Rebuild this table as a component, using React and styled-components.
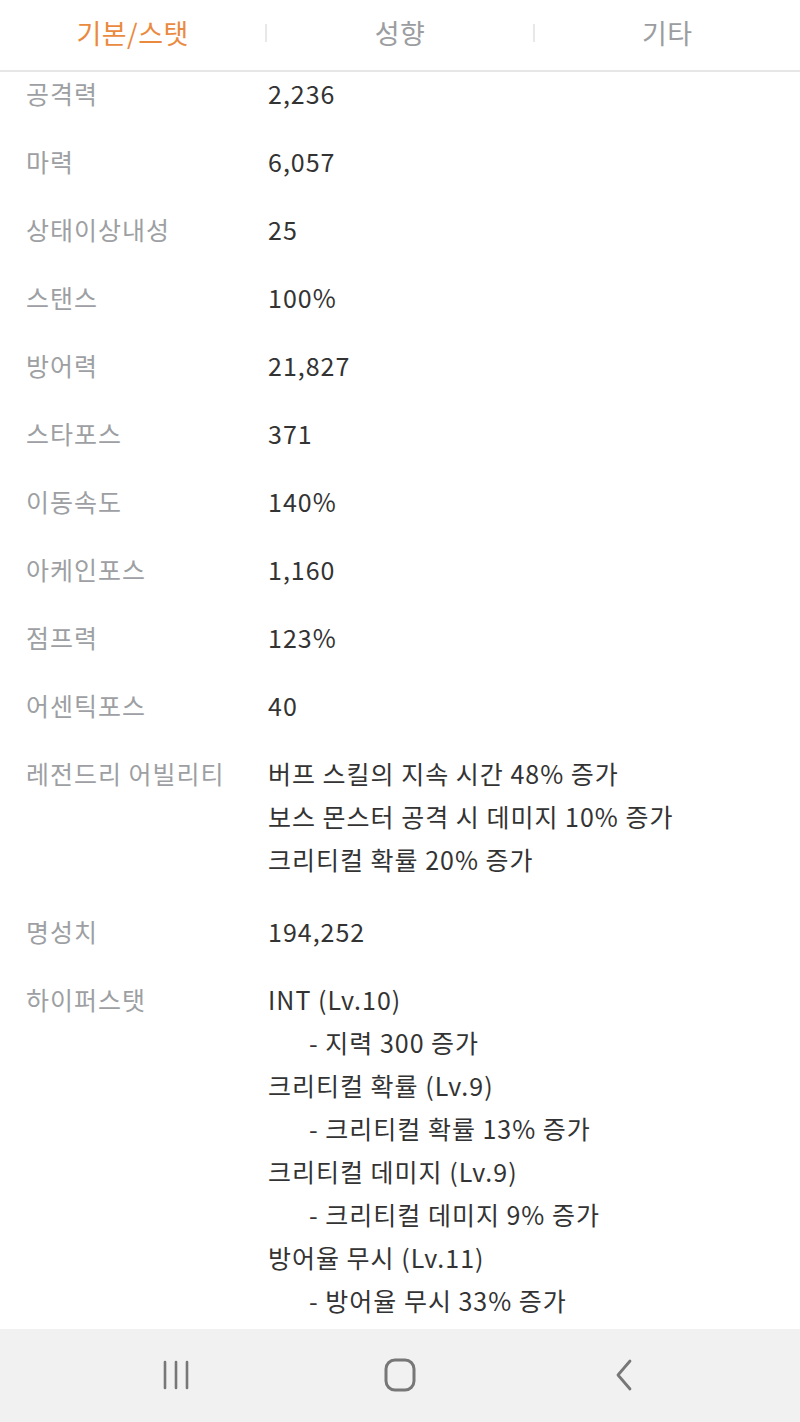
import styled, { createGlobalStyle } from "styled-components";

const GlobalStyle = createGlobalStyle`
    html, body {
        margin: 0;
        padding: 0;
        background: #ffffff;
    }
    body {
        font-family: "Noto Sans CJK KR", "Noto Sans", sans-serif;
    }
`;

const Screen = styled.div`
    width: 800px;
    height: 1422px;
    display: flex;
    flex-direction: column;
    overflow: hidden;
    background: #ffffff;
`;

const TabBar = styled.nav`
    display: flex;
    align-items: center;
    height: 72px;
    padding-bottom: 5px;
    box-sizing: border-box;
    flex-shrink: 0;
    border-bottom: 2px solid #e6e6e6;
    background: #ffffff;
`;

const Tab = styled.div`
    flex: 1;
    display: flex;
    align-items: center;
    justify-content: center;
    font-size: 27px;
    color: ${({ active }) => (active ? "#ea8a3f" : "#9b9da1")};
    letter-spacing: 0.5px;
`;

const TabDivider = styled.span`
    width: 2px;
    height: 18px;
    background: #e8e8e8;
`;

const StatList = styled.ul`
    list-style: none;
    margin: 0;
    padding: 0;
    flex: 1;
    overflow: hidden;
`;

const StatRow = styled.li`
    display: flex;
    align-items: flex-start;
    padding: 11.5px 0 ${({ extra }) => (extra ? 17.5 : 13.5)}px 26px;
    font-size: 25px;
    line-height: 43px;

    &:first-child {
        padding-top: 0;
    }
`;

const Label = styled.div`
    width: 242px;
    flex-shrink: 0;
    color: #9d9fa3;
    letter-spacing: 1px;
`;

const Value = styled.div`
    display: flex;
    flex-direction: column;
    color: #333333;
    letter-spacing: 1px;
`;

const ValueLine = styled.span`
    padding-left: ${({ indent }) => (indent ? 41 : 0)}px;
    white-space: pre;
`;

const NavBar = styled.div`
    height: 93px;
    flex-shrink: 0;
    background: #f1f1f1;
    display: flex;
    align-items: center;
    justify-content: center;
    gap: 164px;
`;

const NavButton = styled.div`
    width: 60px;
    height: 60px;
    display: flex;
    align-items: center;
    justify-content: center;
    margin-top: -2px;
`;

const stats = [
    ["공격력", ["2,236"]],
    ["마력", ["6,057"]],
    ["상태이상내성", ["25"]],
    ["스탠스", ["100%"]],
    ["방어력", ["21,827"]],
    ["스타포스", ["371"]],
    ["이동속도", ["140%"]],
    ["아케인포스", ["1,160"]],
    ["점프력", ["123%"]],
    ["어센틱포스", ["40"]],
    [
        "레전드리 어빌리티",
        [
            "버프 스킬의 지속 시간 48% 증가",
            "보스 몬스터 공격 시 데미지 10% 증가",
            "크리티컬 확률 20% 증가",
        ],
        true,
    ],
    ["명성치", ["194,252"]],
    [
        "하이퍼스탯",
        [
            "INT (Lv.10)",
            "- 지력 300 증가",
            "크리티컬 확률 (Lv.9)",
            "- 크리티컬 확률 13% 증가",
            "크리티컬 데미지 (Lv.9)",
            "- 크리티컬 데미지 9% 증가",
            "방어율 무시 (Lv.11)",
            "- 방어율 무시 33% 증가",
        ],
    ],
];

function App() {
    return (
        <Screen>
            <GlobalStyle />
            <TabBar>
                <Tab active>기본/스탯</Tab>
                <TabDivider />
                <Tab>성향</Tab>
                <TabDivider />
                <Tab>기타</Tab>
            </TabBar>
            <StatList>
                {stats.map(([label, lines, extra]) => (
                    <StatRow key={label} extra={extra}>
                        <Label>{label}</Label>
                        <Value>
                            {lines.map((line) => (
                                <ValueLine
                                    key={line}
                                    indent={line.startsWith("-")}
                                >
                                    {line}
                                </ValueLine>
                            ))}
                        </Value>
                    </StatRow>
                ))}
            </StatList>
            <NavBar>
                <NavButton>
                    <svg width="30" height="30" viewBox="0 0 30 30">
                        <g stroke="#777" strokeWidth="2.6" strokeLinecap="round">
                            <line x1="4" y1="2" x2="4" y2="28" />
                            <line x1="15" y1="2" x2="15" y2="28" />
                            <line x1="26" y1="2" x2="26" y2="28" />
                        </g>
                    </svg>
                </NavButton>
                <NavButton>
                    <svg width="32" height="34" viewBox="0 0 32 34">
                        <rect
                            x="2"
                            y="2"
                            width="28"
                            height="30"
                            rx="9"
                            fill="none"
                            stroke="#777"
                            strokeWidth="3"
                        />
                    </svg>
                </NavButton>
                <NavButton>
                    <svg width="20" height="32" viewBox="0 0 20 32">
                        <polyline
                            points="16,2 4,16 16,30"
                            fill="none"
                            stroke="#777"
                            strokeWidth="2.8"
                            strokeLinecap="round"
                            strokeLinejoin="round"
                        />
                    </svg>
                </NavButton>
            </NavBar>
        </Screen>
    );
}

export default App;
